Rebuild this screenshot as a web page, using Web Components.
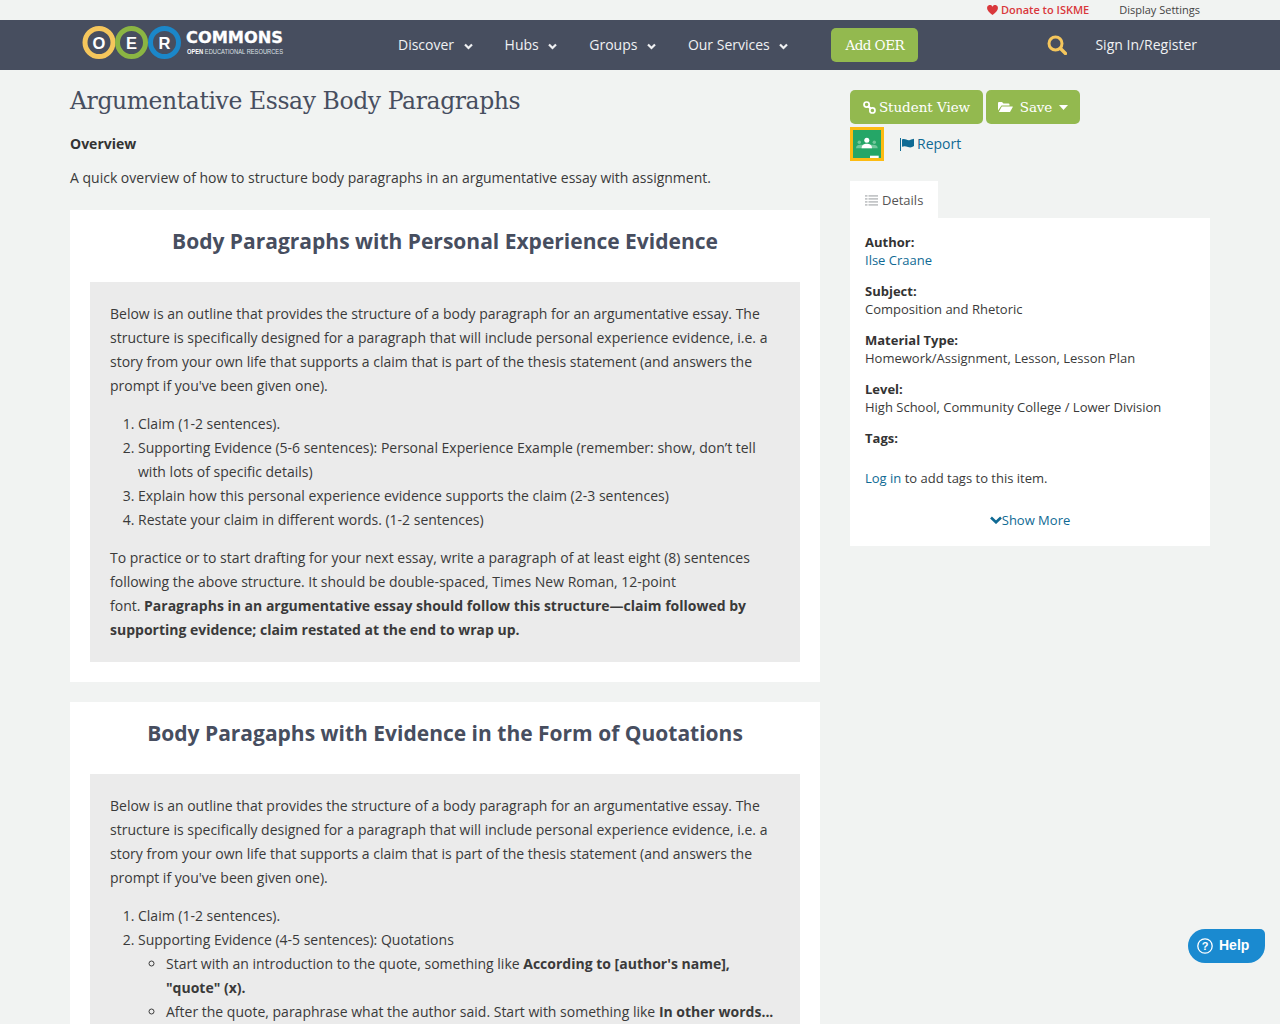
<!DOCTYPE html>
<html lang="en"><head><meta charset="utf-8"><title>Argumentative Essay Body Paragraphs</title>
<style>
html,body{margin:0;padding:0;background:#f1f3f2;font-family:"Open Sans",sans-serif;color:#3a3a3a}
a{color:#0f6a94}
oer-prose ul{margin:0;padding-left:28px;list-style:circle}oer-prose ol:last-child{margin-bottom:0}
</style></head><body>
<template id="t-topbar"><style>
:host{display:block;height:20px;font:11px/20px "Open Sans",sans-serif}
.w{width:1140px;margin:0 auto;display:flex;justify-content:flex-end;gap:30px;padding-right:10px;box-sizing:border-box}
.d{color:#d9383c;display:flex;align-items:center;gap:3px;font-weight:600}.s{color:#444}
svg{width:11px;height:10px;fill:#d9383c}
</style><div class="w"><span class="d"><svg viewBox="0 0 24 22"><path d="M12 22C5 16 0 12 0 6.500A6.300 6.300 0 0 1 12 3.600 6.300 6.300 0 0 1 24 6.500C24 12 19 16 12 22Z"/></svg>Donate to ISKME</span><span class="s">Display Settings</span></div></template>

<template id="t-logo"><style>:host{display:block;width:204px;height:40px}svg{display:block;overflow:visible}</style>
<svg width="204" height="40" viewBox="0 0 204 40">
<circle cx="18" cy="18.500" r="14" fill="#474e5f" stroke="#f5c65c" stroke-width="5"/>
<circle cx="50.500" cy="18.500" r="14" fill="#474e5f" stroke="#8bb543" stroke-width="5"/>
<circle cx="83.500" cy="18.500" r="14" fill="#474e5f" stroke="#1b87c9" stroke-width="5"/>
<g font-family="'Liberation Sans',sans-serif" font-weight="700" font-size="16.500" fill="#fff" text-anchor="middle"><text x="18" y="24.500">O</text><text x="50.500" y="24.500">E</text><text x="83.500" y="24.500">R</text></g>
<text x="105" y="18.700" font-family="'DejaVu Sans',sans-serif" font-weight="700" font-size="16" fill="#fff" stroke="#fff" stroke-width=".3" textLength="97" lengthAdjust="spacingAndGlyphs">COMMONS</text>
<text transform="translate(106 30.300) scale(1 1.250)" font-family="'Liberation Sans',sans-serif" font-size="5.700" fill="#dfe1e6" textLength="96" lengthAdjust="spacingAndGlyphs"><tspan font-weight="700" fill="#fff">OPEN</tspan> EDUCATIONAL RESOURCES</text>
</svg></template>

<template id="t-navitem"><style>
:host{display:flex;align-items:center;color:#f0f1f3;font:14px/20px "Open Sans",sans-serif}
svg{width:9px;height:7px;margin-left:9.500px;margin-top:2px;fill:none;stroke:#f0f1f3;stroke-width:2.200}
</style><slot></slot><svg viewBox="0 0 9 7"><path d="M1 1.500 4.500 5 8 1.500"/></svg></template>

<template id="t-btn"><style>
:host{display:inline-flex;align-items:center;justify-content:center;box-sizing:border-box;height:34px;background:#93b94f;color:#fff;border-radius:5px;font:13.500px/20px "DejaVu Serif",serif;letter-spacing:-.15px;white-space:nowrap}
</style><slot></slot></template>

<template id="t-nav"><style>
:host{display:block;height:50px;background:#474e5f}
.w{width:1140px;height:50px;margin:0 auto;position:relative;display:flex;align-items:center}
oer-logo{margin-left:11px;margin-top:-2px}
.m{display:flex;gap:32px;margin-left:113px}
oer-btn{width:87px;margin-left:43px;height:34px;letter-spacing:-.55px}
.r{margin-left:auto;display:flex;align-items:center;gap:28px;padding-right:13px;color:#f0f1f3;font-size:14px}
.r span{margin-bottom:2px}
svg{width:20px;height:20px;display:block;fill:none;stroke:#f5c65c;stroke-width:3}
</style><div class="w"><oer-logo></oer-logo><div class="m"><oer-navitem>Discover</oer-navitem><oer-navitem>Hubs</oer-navitem><oer-navitem>Groups</oer-navitem><oer-navitem>Our Services</oer-navitem></div><oer-btn>Add OER</oer-btn><div class="r"><svg viewBox="0 0 20 20"><circle cx="8.500" cy="8.500" r="6.500"/><path d="M13.500 13.500 18.500 18.500" stroke-linecap="round" stroke-width="3.400"/></svg><span>Sign In/Register</span></div></div></template>

<template id="t-card"><style>
:host{display:block;background:#fff;padding:19px 20px 20px;margin-bottom:20px}
h2{margin:0 0 29px;font:700 21px/24px "Open Sans",sans-serif;color:#474e5f;text-align:center}
.b{background:#ebebeb;padding:20px;font:14px/24px "Open Sans",sans-serif}
</style><h2><slot name="title"></slot></h2><div class="b"><slot></slot></div></template>

<template id="t-actions"><style>
:host{display:block}
.a{display:flex;gap:3px}
oer-btn.sv{width:133px;letter-spacing:-.05px}oer-btn.sa{width:94px}
svg{display:block;fill:#fff}
.r2{display:flex;align-items:center;margin-top:3px;gap:16px;color:#0f6a94;font:14px/20px "Open Sans",sans-serif}
.gc{box-sizing:border-box;width:34px;height:34px;border:3px solid #fdbb12;background:#25a667;display:block}
.rp{display:flex;align-items:center;gap:3px}
</style><div class="a"><oer-btn class="sv"><svg width="13" height="13" viewBox="0 0 13 13" style="margin-right:3px;fill:none;stroke:#fff;stroke-width:1.700"><circle cx="3.600" cy="3.600" r="2.600"/><circle cx="9.400" cy="9.400" r="2.600"/><path d="M5.200 5.200 7.800 7.800" stroke-width="2.200"/></svg>Student View</oer-btn><oer-btn class="sa"><svg width="15" height="12" viewBox="0 0 15 12" style="margin-right:7px"><path d="M0 2A1 1 0 0 1 1 1H4L5.500 2.500H10.500A1 1 0 0 1 11.500 3.500V4.500H3.500L0 9.500ZM3.800 5.500H14.500A.4.400 0 0 1 14.800 6L12 11H.8Z"/></svg>Save<svg width="9" height="5" viewBox="0 0 9 5" style="margin-left:7px"><path d="M0 0H9L4.500 5Z"/></svg></oer-btn></div>
<div class="r2"><svg class="gc" viewBox="0 0 28 28"><circle cx="6.300" cy="12.300" r="1.700" fill="#72c79b"/><circle cx="21.300" cy="12.300" r="1.700" fill="#72c79b"/><path d="M3 18.200C3 15.600 5 14.800 7 14.800H20.500C22.500 14.800 24.700 15.600 24.700 18.200Z" fill="#72c79b"/><circle cx="13.800" cy="10.300" r="2.500" fill="#fff"/><path d="M8.600 18.200C8.800 15 11 13.800 13.800 13.800S18.800 15 19 18.200Z" fill="#fff"/><path d="M17 25.700H25.700V28H17Z" fill="#fff"/></svg>
<span class="rp"><svg width="14" height="13" viewBox="0 0 14 13" style="fill:#0f6a94"><path d="M0 0H1V13H0ZM2 1.500C5 0 7 3 10 2 11.500 1.600 13 1 14 .8V8C12 9.500 10 9.800 8 9 6 8.200 4 7.700 2 8.800Z"/></svg>Report</span></div></template>

<template id="t-details"><style>
:host{display:block;margin-top:20px;font:13px/18px "Open Sans",sans-serif}
.tab{display:inline-flex;align-items:center;gap:4px;height:37px;box-sizing:border-box;padding:1px 15px 0;background:#fff;color:#555;vertical-align:top}
.p{background:#fff;padding:15px 15px 17px;height:328px;box-sizing:border-box;display:flex;flex-direction:column}
.more{margin-top:auto;text-align:center;color:#0f6a94;display:flex;justify-content:center;align-items:center}
svg.l{fill:#c4c6c8}
</style><div class="tab"><svg class="l" width="13" height="11" viewBox="0 0 13 11"><path d="M0 0H2.500V1.800H0ZM3.500 0H13V1.800H3.500ZM0 3H2.500V4.800H0ZM3.500 3H13V4.800H3.500ZM0 6H2.500V7.800H0ZM3.500 6H13V7.800H3.500ZM0 9H2.500V10.800H0ZM3.500 9H13V10.800H3.500Z"/></svg>Details</div>
<div class="p"><slot></slot><div class="more"><svg width="12" height="8" viewBox="0 0 12 8" style="fill:none;stroke:#0f6a94;stroke-width:2.600"><path d="M1 1.500 6 6.300 11 1.500"/></svg>Show More</div></div></template>

<template id="t-field"><style>
:host{display:block;margin-bottom:13px}
b{display:block;font-weight:700;color:#333}
</style><b><slot name="k"></slot></b><slot></slot></template>

<template id="t-help"><style>
:host{position:fixed;right:15px;bottom:61px;display:flex;align-items:center;gap:6px;box-sizing:border-box;width:77px;height:34px;padding:0 0 0 9px;background:#1a8ad0;color:#fff;border-radius:17px 5px 17px 17px;font:700 14px/20px "Liberation Sans",sans-serif}
svg{width:16px;height:16px;fill:none;stroke:#fff;stroke-width:1.300}
span{margin-bottom:2px}
text{font:700 11px "Liberation Sans",sans-serif;fill:#fff;stroke:none}
</style><svg viewBox="0 0 16 16"><circle cx="8" cy="8" r="7.200"/><text x="8" y="12" text-anchor="middle">?</text></svg><span>Help</span></template>

<template id="t-page"><style>
:host{display:block}
.w{width:1140px;margin:0 auto;display:flex;gap:30px;padding-top:20px}
.l{width:750px;flex:none}.r{width:360px;flex:none}
h1{margin:0;font:400 23.500px/22px "DejaVu Serif",serif;letter-spacing:-.41px;color:#474e5f}
.ov{font:700 14px/20px "Open Sans",sans-serif;margin:22px 0 14px;color:#333}
.in{font:14px/20px "Open Sans",sans-serif;margin:0 0 22px}
</style><div class="w"><main class="l"><h1>Argumentative Essay Body Paragraphs</h1><div class="ov">Overview</div><p class="in">A quick overview of how to structure body paragraphs in an argumentative essay with assignment.</p><slot></slot></main><aside class="r"><slot name="side"></slot></aside></div></template>

<template id="t-prose"><style>
:host{display:block}
::slotted(p){margin:0 0 14px}
::slotted(p:last-child){margin-bottom:0}
::slotted(ol){margin:0 0 14px;padding-left:28px}
</style><slot></slot></template>

<oer-topbar></oer-topbar><oer-nav></oer-nav>
<oer-page>
<oer-card><span slot="title">Body Paragraphs with Personal Experience Evidence</span>
<oer-prose>
<p>Below is an outline that provides the structure of a body paragraph for an argumentative essay. The structure is specifically designed for a paragraph that will include personal experience evidence, i.e. a story from your own life that supports a claim that is part of the thesis statement (and answers the prompt if you've been given one).</p>
<ol><li>Claim (1-2 sentences).</li><li>Supporting Evidence (5-6 sentences): Personal Experience Example (remember: show, don’t tell with lots of specific details)</li><li>Explain how this personal experience evidence supports the claim (2-3 sentences)</li><li>Restate your claim in different words. (1-2 sentences)</li></ol>
<p>To practice or to start drafting for your next essay, write a paragraph of at least eight (8) sentences following the above structure. It should be double-spaced, Times New Roman, 12-point<br>font. <b>Paragraphs in an argumentative essay should follow this structure—claim followed by supporting evidence; claim restated at the end to wrap up.</b></p>
</oer-prose></oer-card>
<oer-card><span slot="title">Body Paragaphs with Evidence in the Form of Quotations</span>
<oer-prose>
<p>Below is an outline that provides the structure of a body paragraph for an argumentative essay. The structure is specifically designed for a paragraph that will include personal experience evidence, i.e. a story from your own life that supports a claim that is part of the thesis statement (and answers the prompt if you've been given one).</p>
<ol><li>Claim (1-2 sentences).</li><li>Supporting Evidence (4-5 sentences): Quotations<ul><li>Start with an introduction to the quote, something like <b>According to [author's name], "quote" (x).</b></li><li>After the quote, paraphrase what the author said. Start with something like <b>In other words...</b></li></ul></li></ol>
</oer-prose></oer-card>
<div slot="side"><oer-actions></oer-actions><oer-details>
<oer-field><span slot="k">Author:</span><a>Ilse Craane</a></oer-field>
<oer-field><span slot="k">Subject:</span>Composition and Rhetoric</oer-field>
<oer-field><span slot="k">Material Type:</span>Homework/Assignment, Lesson, Lesson Plan</oer-field>
<oer-field><span slot="k">Level:</span>High School, Community College / Lower Division</oer-field>
<oer-field style="margin-bottom:22px"><span slot="k">Tags:</span></oer-field>
<div><a>Log in</a> to add tags to this item.</div>
</oer-details></div>
</oer-page>
<oer-help></oer-help>
<script>
for(const n of ['topbar','logo','navitem','btn','nav','card','actions','details','field','help','page','prose']){
  customElements.define('oer-'+n,class extends HTMLElement{constructor(){super();this.attachShadow({mode:'open'}).append(document.getElementById('t-'+n).content.cloneNode(true));}});
}
</script>
</body></html>
